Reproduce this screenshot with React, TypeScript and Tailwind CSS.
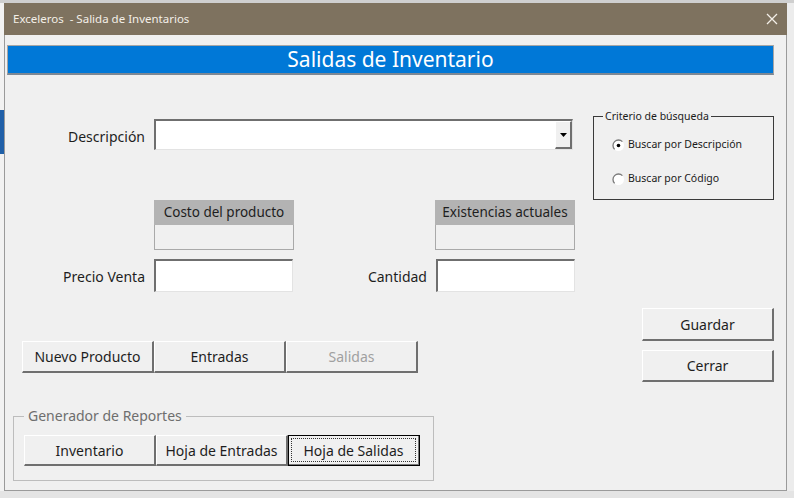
import React from "react";

const raised =
  "bg-[#f0f0f0] border-t border-l border-t-white border-l-white border-r-2 border-b-2 border-r-[#6f6f6f] border-b-[#6f6f6f]";
const sunken =
  "bg-white border-t-2 border-l-2 border-t-[#6f6f6f] border-l-[#6f6f6f] border-r border-b border-r-[#e3e3e3] border-b-[#e3e3e3]";

function Btn({ label, className = "", disabled = false }: { label: string; className?: string; disabled?: boolean }) {
  return (
    <div
      className={`flex items-center justify-center text-[14px] ${raised} ${className} ${
        disabled ? "text-[#a0a0a0]" : "text-[#1e1e1e]"
      }`}
    >
      {label}
    </div>
  );
}

function Radio({ label, checked = false }: { label: string; checked?: boolean }) {
  return (
    <div className="flex h-[16px] items-center">
      <svg width="13" height="13" viewBox="0 0 13 13" className="ml-[9px]">
        <circle cx="6.5" cy="6.5" r="5.5" fill="#fff" />
        <path d="M10.4 2.6 A5.5 5.5 0 0 0 2.6 10.4" stroke="#7a7a7a" strokeWidth="1.3" fill="none" />
        {checked && <circle cx="6.5" cy="6.5" r="1.8" fill="#000" />}
      </svg>
      <span className="ml-[3px] text-[10.5px] text-[#1a1a1a]">{label}</span>
    </div>
  );
}

function ValueBox({ title }: { title: string }) {
  return (
    <div className="flex h-[50px] w-[140px] flex-col">
      <div className="flex h-[25px] items-center justify-center bg-[#b3b3b3] text-[13.5px] text-[#1e1e1e]">{title}</div>
      <div className="flex-1 border border-t-0 border-[#a9a9a9] bg-[#f0f0f0]" />
    </div>
  );
}

export default function App() {
  return (
    <div className="flex h-[498px] w-[794px] flex-col overflow-hidden bg-[#e4e4e4] font-['Noto_Sans',sans-serif]">
      <div className="h-[3px] bg-[#cfcfcf]" />
      <div className="flex">
        <div className="flex w-[4px] flex-col bg-[#f2f2f2]">
          <div className="mt-[107px] h-[44px] bg-[#2060a8]" />
        </div>

        {/* window */}
        <div className="flex h-[488px] w-[783px] flex-col">
          <div className="flex h-[32px] items-center justify-between bg-[#7e725f] pl-[9px] pr-[9px]">
            <span className="text-[11.5px] text-[#f3efe8]">Exceleros&nbsp; - Salida de Inventarios</span>
            <svg width="12" height="12" viewBox="0 0 12 12">
              <path d="M1 1 L11 11 M11 1 L1 11" stroke="#f3efe8" strokeWidth="1.3" />
            </svg>
          </div>

          <div className="flex flex-1 flex-col border-x border-b border-[#9a9a9a] bg-[#f0f0f0]">
            <div className="ml-[2px] mt-[10px] flex h-[30px] w-[767px] items-center justify-center border border-[#a6a6a6] border-b-2 border-b-[#7d8894] bg-[#0078d7] text-[21px] text-white">
              Salidas de Inventario
            </div>

            <div className="flex">
              {/* left column */}
              <div className="flex w-[588px] flex-col">
                <div className="mt-[44px] flex h-[31px] items-center">
                  <span className="w-[149px] pr-[9px] pt-[3px] text-right text-[14px] text-[#1e1e1e]">Descripción</span>
                  <div className={`flex h-[31px] w-[419px] justify-end ${sunken}`}>
                    <div className={`flex w-[17px] items-center justify-center ${raised}`}>
                      <svg width="7" height="4" viewBox="0 0 7 4">
                        <path d="M0 0 H7 L3.5 4 Z" fill="#000" />
                      </svg>
                    </div>
                  </div>
                </div>

                <div className="mt-[50px] flex">
                  <div className="ml-[149px]">
                    <ValueBox title="Costo del producto" />
                  </div>
                  <div className="ml-[141px]">
                    <ValueBox title="Existencias actuales" />
                  </div>
                </div>

                <div className="mt-[9px] flex h-[33px] items-center">
                  <span className="w-[149px] pr-[9px] pt-[2px] text-right text-[14px] text-[#1e1e1e]">Precio Venta</span>
                  <div className={`h-[33px] w-[139px] ${sunken}`} />
                  <span className="w-[143px] pr-[9px] pt-[2px] text-right text-[14px] text-[#1e1e1e]">Cantidad</span>
                  <div className={`h-[33px] w-[139px] ${sunken}`} />
                </div>

                <div className="ml-[17px] mt-[49px] flex h-[32px]">
                  <Btn label="Nuevo Producto" className="w-[132px]" />
                  <Btn label="Entradas" className="w-[132px]" />
                  <Btn label="Salidas" className="w-[132px]" disabled />
                </div>

                <fieldset className="ml-[8px] mt-[34px] h-[74px] w-[421px] border border-[#bdbdbd] pl-[10px]">
                  <legend className="px-[4px] text-[14px] leading-[18px] text-[#6e6e6e]">Generador de Reportes</legend>
                  <div className="mt-[10px] flex h-[31px]">
                    <Btn label="Inventario" className="w-[132px]" />
                    <Btn label="Hoja de Entradas" className="w-[132px]" />
                    <div className="flex w-[132px] border border-black bg-[#f0f0f0]">
                      <div className="flex flex-1 border-r border-b border-[#7a7a7a] p-[2px]">
                        <div className="flex flex-1 items-center justify-center border border-dotted border-[#333] text-[14px] text-[#1e1e1e]">
                          Hoja de Salidas
                        </div>
                      </div>
                    </div>
                  </div>
                </fieldset>
              </div>

              {/* right column */}
              <div className="flex w-[181px] flex-col">
                <fieldset className="mt-[34px] h-[91px] w-[181px] border border-[#3a3a3a] pl-[9px]">
                  <legend className="px-[2px] text-[10.5px] leading-[14px] text-[#1a1a1a]">Criterio de búsqueda</legend>
                  <div className="mt-[14px]">
                    <Radio label="Buscar por Descripción" checked />
                  </div>
                  <div className="mt-[18px]">
                    <Radio label="Buscar por Código" />
                  </div>
                </fieldset>
                <Btn label="Guardar" className="ml-[49px] mt-[108px] h-[33px] w-[132px]" />
                <Btn label="Cerrar" className="ml-[49px] mt-[9px] h-[32px] w-[132px]" />
              </div>
            </div>
          </div>
        </div>

        <div className="flex-1 bg-[#ececec]" />
      </div>
    </div>
  );
}
